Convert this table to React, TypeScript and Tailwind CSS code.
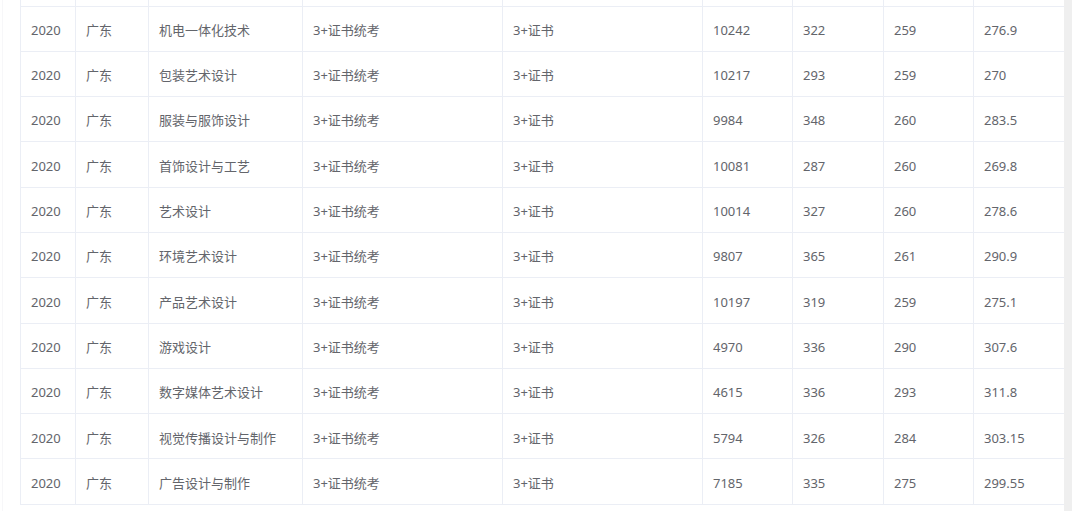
const rows: string[][] = [
  ['2020', '广东', '机电一体化技术', '3+证书统考', '3+证书', '10242', '322', '259', '276.9'],
  ['2020', '广东', '包装艺术设计', '3+证书统考', '3+证书', '10217', '293', '259', '270'],
  ['2020', '广东', '服装与服饰设计', '3+证书统考', '3+证书', '9984', '348', '260', '283.5'],
  ['2020', '广东', '首饰设计与工艺', '3+证书统考', '3+证书', '10081', '287', '260', '269.8'],
  ['2020', '广东', '艺术设计', '3+证书统考', '3+证书', '10014', '327', '260', '278.6'],
  ['2020', '广东', '环境艺术设计', '3+证书统考', '3+证书', '9807', '365', '261', '290.9'],
  ['2020', '广东', '产品艺术设计', '3+证书统考', '3+证书', '10197', '319', '259', '275.1'],
  ['2020', '广东', '游戏设计', '3+证书统考', '3+证书', '4970', '336', '290', '307.6'],
  ['2020', '广东', '数字媒体艺术设计', '3+证书统考', '3+证书', '4615', '336', '293', '311.8'],
  ['2020', '广东', '视觉传播设计与制作', '3+证书统考', '3+证书', '5794', '326', '284', '303.15'],
  ['2020', '广东', '广告设计与制作', '3+证书统考', '3+证书', '7185', '335', '275', '299.55'],
];

const widths = [55, 73, 154, 200, 200, 90, 91, 90, 91];

export default function App() {
  return (
    <div
      className="flex h-[511px] w-[1080px] overflow-hidden bg-white"
      style={{ fontFamily: '"Noto Sans", "Noto Sans CJK SC", sans-serif' }}
    >
      <div className="w-[20px] shrink-0 pl-[2px]">
        <div className="h-full border-l border-[#f7f7f9]" />
      </div>
      <div className="w-[1044px] shrink-0">
        <table className="w-[1044px] table-fixed border-collapse text-[13px] text-[#63656b]">
          <colgroup>
            {widths.map((w, i) => (
              <col key={i} style={{ width: w }} />
            ))}
          </colgroup>
          <tbody>
            {/* cut-off row scrolled above the view */}
            <tr className="h-[6px]">
              {widths.map((_, i) => (
                <td key={i} className="border-x border-b border-[#ebeef5] p-0" />
              ))}
            </tr>
            {rows.map((r, ri) => (
              <tr key={ri} className="h-[45.3px]">
                {r.map((c, ci) => (
                  <td
                    key={ci}
                    className="border border-t-0 border-[#ebeef5] pl-[10px] pr-[10px] pt-[4px] pb-0 align-middle whitespace-nowrap"
                  >
                    {c}
                  </td>
                ))}
              </tr>
            ))}
          </tbody>
        </table>
      </div>
      <div className="w-[8px] shrink-0 bg-[#efefef]" />
      <div className="flex-1" />
    </div>
  );
}
